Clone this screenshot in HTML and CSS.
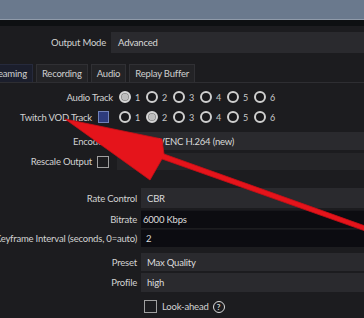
FILE: index.html
```html
<!DOCTYPE html>
<html>
<head>
<meta charset="utf-8">
<link rel="stylesheet" href="styles.css">
</head>
<body>
<div class="screen">
  <div class="titlebar"></div>
  <div class="strip"></div>
  <div class="content">
    <div class="row row-output">
      <span class="label lbl-106">Output Mode</span>
      <div class="combo">Advanced</div>
    </div>
    <div class="tabs">
      <div class="tab active">Streaming</div>
      <div class="tab">Recording</div>
      <div class="tab">Audio</div>
      <div class="tab">Replay Buffer</div>
    </div>
    <div class="pane">
      <div class="row track">
        <span class="label lbl-track">Audio Track</span>
        <div class="radios">
          <span class="ritem"><span class="radio checked"></span><span class="num">1</span></span>
          <span class="ritem"><span class="radio"></span><span class="num">2</span></span>
          <span class="ritem"><span class="radio"></span><span class="num">3</span></span>
          <span class="ritem"><span class="radio"></span><span class="num">4</span></span>
          <span class="ritem"><span class="radio"></span><span class="num">5</span></span>
          <span class="ritem"><span class="radio"></span><span class="num">6</span></span>
        </div>
      </div>
      <div class="row track">
        <span class="label lbl-track">Twitch VOD Track<span class="check check-on"></span></span>
        <div class="radios">
          <span class="ritem"><span class="radio"></span><span class="num">1</span></span>
          <span class="ritem"><span class="radio checked"></span><span class="num">2</span></span>
          <span class="ritem"><span class="radio"></span><span class="num">3</span></span>
          <span class="ritem"><span class="radio"></span><span class="num">4</span></span>
          <span class="ritem"><span class="radio"></span><span class="num">5</span></span>
          <span class="ritem"><span class="radio"></span><span class="num">6</span></span>
        </div>
      </div>
      <div class="row row-encoder">
        <span class="label lbl-106">Encoder</span>
        <div class="combo">NVIDIA NVENC H.264 (new)</div>
      </div>
      <div class="row row-rescale">
        <span class="label lbl-92">Rescale Output</span>
        <span class="check check-rescale"></span>
        <div class="combo combo-disabled"></div>
      </div>
      <div class="settings">
        <div class="row row-rate">
          <span class="label lbl-137">Rate Control</span>
          <div class="field combo-s">CBR</div>
        </div>
        <div class="row row-spin first-spin">
          <span class="label lbl-137">Bitrate</span>
          <div class="field spin">6000 Kbps</div>
        </div>
        <div class="row row-spin">
          <span class="label lbl-137">Keyframe Interval (seconds, 0=auto)</span>
          <div class="field spin spin-2">2</div>
        </div>
        <div class="row row-preset">
          <span class="label lbl-137">Preset</span>
          <div class="field combo-s">Max Quality</div>
        </div>
        <div class="row row-profile">
          <span class="label lbl-137">Profile</span>
          <div class="field combo-s">high</div>
        </div>
        <div class="row row-look">
          <span class="check check-look"></span>
          <span class="look-text">Look-ahead</span>
          <span class="help">?</span>
        </div>
      </div>
    </div>
  </div>
  <svg class="arrow" width="364" height="318" viewBox="0 0 364 318">
    <polygon points="65,119 162,139 164,154 368,227 368,232 162,159 150,180" fill="#e5141b" stroke="#c80f16" stroke-width="0.8" stroke-linejoin="round"/>
  </svg>
</div>
</body>
</html>
```
FILE: styles.css
```css
* { box-sizing: border-box; }
html, body { margin: 0; padding: 0; }
body {
  width: 364px;
  height: 318px;
  overflow: hidden;
  background: #1c1c1f;
  font-family: Lato, "Open Sans", sans-serif;
  font-size: 9.5px;
  letter-spacing: -0.2px;
  color: #d2d2d2;
}
.screen { position: relative; width: 364px; height: 318px; overflow: hidden; background: #1c1c1f; }
.titlebar { height: 20px; background: #6a798d; border-bottom: 1px solid #8f9aa9; }
.strip { height: 6px; background: #0e1012; }
.content { padding-top: 6px; }
.row { display: flex; align-items: center; }
.label { flex: none; display: flex; justify-content: flex-end; align-items: center; white-space: nowrap; }
.lbl-106 { width: 106px; }
.lbl-92 { width: 92px; }
.lbl-137 { width: 137px; }
.lbl-track { width: 113px; }

.combo {
  flex: 1;
  height: 100%;
  margin-left: 5px;
  padding-left: 7px;
  display: flex;
  align-items: center;
  background: #2a2a2e;
  color: #dadada;
  white-space: nowrap;
}
.row-output { height: 21px; }

.tabs {
  display: flex;
  margin-top: 11px;
  margin-left: -19px;
  gap: 3px;
  height: 19px;
  border-bottom: 1px solid #2e2e32;
}
.tab {
  height: 18px;
  padding: 0 5px;
  display: flex;
  align-items: center;
  background: #232326;
  border: 1px solid #303034;
  border-bottom: none;
  color: #d0d0d0;
  white-space: nowrap;
}
.tab.active { background: #1b1e2c; border-color: #262a3c; }

.pane { padding-top: 4px; }
.track { height: 20px; }
.radios { display: flex; margin-left: 6px; }
.ritem { display: flex; align-items: center; width: 27px; }
.radio {
  width: 12px;
  height: 12px;
  border-radius: 50%;
  border: 2px solid #cfcfcf;
  background: #18181b;
}
.radio.checked { background: radial-gradient(circle, #bdbdbd 0 3px, #8e8e8e 3.5px); border-color: #d6d6d6; }
.num { margin-left: 4px; font-size: 9px; color: #c8c8c8; }

.check {
  flex: none;
  width: 12px;
  height: 12px;
  border: 1px solid #a0a0a0;
  background: #1c1c1f;
}
.check-on { margin-left: 6px; margin-right: 4px; width: 11px; height: 12px; background: #2d3b7c; border-color: #7080b8; }

.row-encoder { height: 18px; margin-top: 5px; }
.row-rescale { height: 17px; margin-top: 3px; }
.check-rescale { margin-left: 5px; }
.combo-disabled { margin-left: 8px; background: #252528; }

.settings { padding-top: 18px; }
.field {
  flex: 1;
  height: 100%;
  margin-left: 4px;
  display: flex;
  align-items: center;
  white-space: nowrap;
  color: #dcdcdc;
}
.combo-s { background: #2a2a2e; padding-left: 6px; }
.spin { background: #0c0c11; padding-left: 2px; border-top: 1px solid #16161b; }
.spin-2 { padding-left: 5px; }
.row-rate { height: 20px; }
.row-spin { height: 18px; margin-top: 1px; }
.first-spin { margin-top: 2px; }
.row-preset { height: 18px; margin-top: 6px; }
.row-profile { height: 19px; margin-top: 2px; }
.row-look { height: 13px; margin-top: 8px; }
.check-look { margin-left: 144px; width: 13px; height: 13px; }
.look-text { margin-left: 5px; }
.help {
  margin-left: 4px;
  width: 12px;
  height: 12px;
  border-radius: 50%;
  border: 1.3px solid #dcdcdc;
  font-size: 8px;
  font-weight: bold;
  letter-spacing: 0;
  display: flex;
  align-items: center;
  justify-content: center;
  line-height: 1;
}

.arrow { position: absolute; left: 0; top: 0; pointer-events: none; }
```
